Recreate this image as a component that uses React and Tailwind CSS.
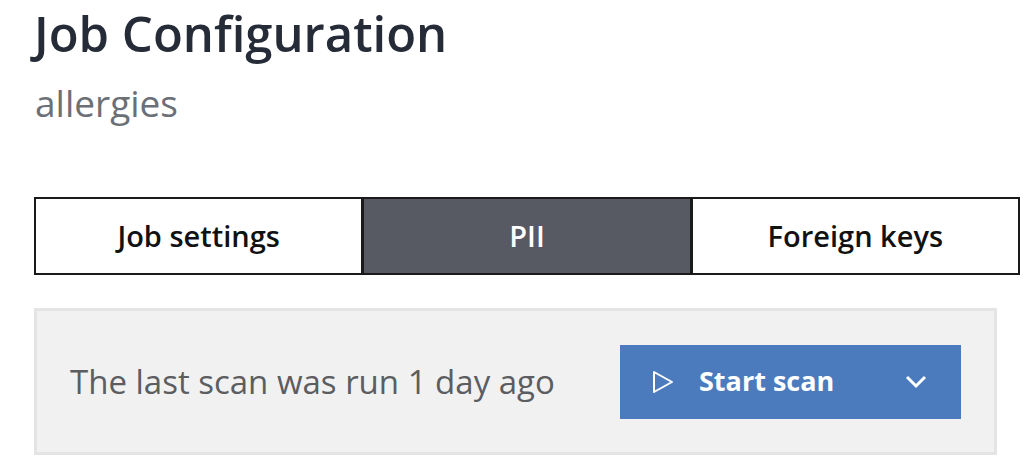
import { useState } from "react";

const tabs = ["Job settings", "PII", "Foreign keys"];

export default function App() {
  const [active, setActive] = useState("PII");

  return (
    <div className="min-h-screen bg-white pl-[34px] pr-[4px] pt-[3px]" style={{ fontFamily: '"Open Sans", sans-serif' }}>
      <h1 className="text-[49px] font-semibold leading-[60px] text-[#262b38]">Job Configuration</h1>
      <p className="mt-[18px] pl-[1px] text-[37px] leading-[44px] text-[#6b6f76]">allergies</p>

      {/* tabs */}
      <div className="mt-[72px] flex h-[78px] w-[986px] border-2 border-[#1a1a1a]">
        {tabs.map((t, i) => (
          <button
            key={t}
            onClick={() => setActive(t)}
            className={
              "flex flex-1 items-center justify-center text-[29px] font-semibold " +
              (i > 0 ? "border-l-[3px] border-[#1a1a1a] " : "") +
              (active === t ? "bg-[#575a63] text-white" : "bg-white text-[#111]")
            }
          >
            {t}
          </button>
        ))}
      </div>

      {/* scan panel */}
      <div className="mt-[33px] flex h-[147px] w-[963px] items-center justify-between border-[3px] border-[#e4e4e4] bg-[#f1f1f1] pl-[33px] pr-[33px]">
        <span className="text-[33px] text-[#5b5d61]">The last scan was run 1 day ago</span>
        <button className="flex h-[74px] w-[341px] items-center bg-[#4b7bbd] pl-[32px] pr-[34px] text-white">
          <svg width="22" height="24" viewBox="0 0 22 24" fill="none" stroke="white" strokeWidth="2">
            <path d="M2 2 L20 12 L2 22 Z" strokeLinejoin="round" />
          </svg>
          <span className="ml-[25px] text-[27px] font-bold">Start scan</span>
          <svg className="ml-auto" width="22" height="14" viewBox="0 0 22 14" fill="none" stroke="white" strokeWidth="3">
            <path d="M2 2 L11 11 L20 2" />
          </svg>
        </button>
      </div>
    </div>
  );
}
